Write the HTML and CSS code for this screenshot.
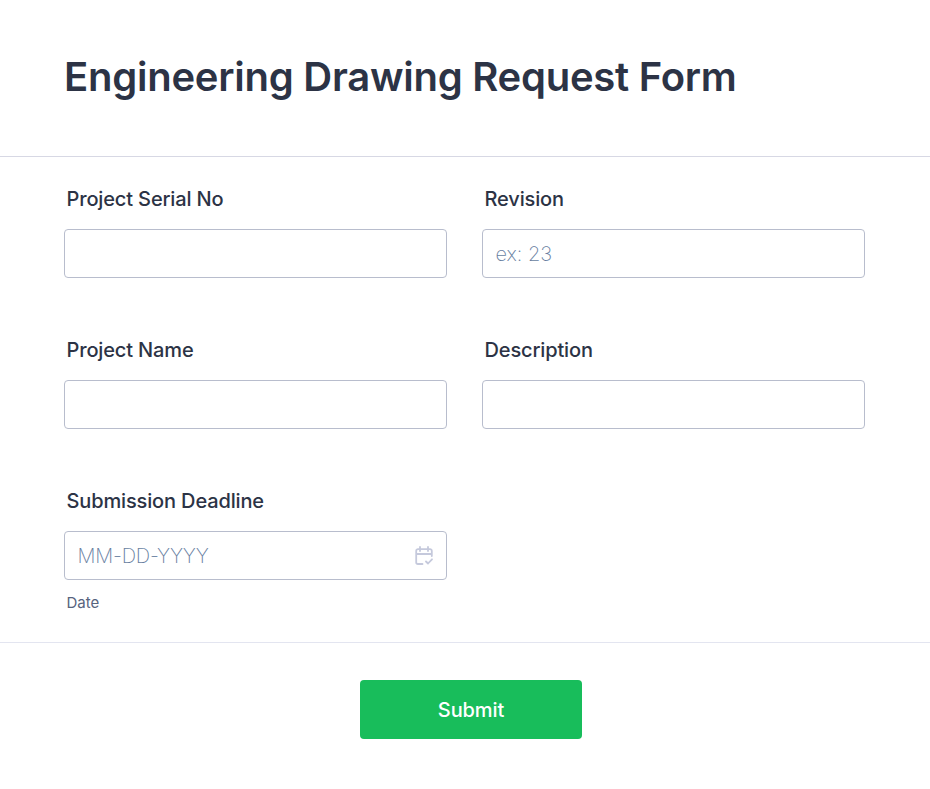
FILE: index.html
```html
<!DOCTYPE html>
<html lang="en">
<head>
    <meta charset="UTF-8">
    <meta name="viewport" content="width=device-width, initial-scale=1.0">
    <title>Engineering Drawing Request Form</title>
    <link rel="stylesheet" href="styles.css">
</head>
<body>
    <form class="form">
        <header class="form-header">
            <h1>Engineering Drawing Request Form</h1>
        </header>
        <div class="form-fields">
            <div class="field">
                <label for="serialNo">Project Serial No</label>
                <input type="text" id="serialNo">
            </div>
            <div class="field">
                <label for="revision">Revision</label>
                <input type="text" id="revision" placeholder="ex: 23">
            </div>
            <div class="field">
                <label for="projectName">Project Name</label>
                <input type="text" id="projectName">
            </div>
            <div class="field">
                <label for="description">Description</label>
                <input type="text" id="description">
            </div>
            <div class="field">
                <label for="deadline">Submission Deadline</label>
                <div class="date-input">
                    <input type="text" id="deadline" placeholder="MM-DD-YYYY">
                    <svg class="calendar-icon" viewBox="0 0 18 20" fill="none" stroke="currentColor" stroke-width="1.8" stroke-linecap="round" stroke-linejoin="round">
                        <path d="M7.5 18H3a1.8 1.8 0 0 1-1.8-1.8V5A1.8 1.8 0 0 1 3 3.2h12A1.8 1.8 0 0 1 16.8 5v5M1.2 8h15.6M5 1v4M13 1v4M11 15.5l2 2 4-4.2"/>
                    </svg>
                </div>
                <span class="hint">Date</span>
            </div>
        </div>
        <footer class="form-footer">
            <button type="submit">Submit</button>
        </footer>
    </form>
</body>
</html>
```

FILE: styles.css
```css
* {
    box-sizing: border-box;
}

body {
    margin: 0;
    font-family: Inter, sans-serif;
    color: #2c3345;
    background-color: #fff;
}

.form-header {
    height: 157px;
    padding: 52px 64px 0;
    border-bottom: 1px solid #d7d8e4;
}

h1 {
    margin: 0;
    font-size: 40px;
    font-weight: 600;
    line-height: 50px;
    letter-spacing: -0.25px;
    white-space: nowrap;
}

.form-fields {
    display: grid;
    grid-template-columns: 383px 383px;
    grid-template-rows: 151px 151px 152px;
    column-gap: 35px;
    height: 486px;
    padding: 30px 64px 0;
    border-bottom: 1px solid #e3e5f0;
}

label {
    display: block;
    height: 42px;
    padding-left: 2.5px;
    font-size: 20px;
    font-weight: 500;
    line-height: 24px;
    letter-spacing: -0.14px;
}

input {
    display: block;
    width: 100%;
    height: 49px;
    padding: 0 12.5px;
    border: 1px solid #b8bdcd;
    border-radius: 4px;
    font-family: inherit;
    font-size: 20px;
    background-color: #fff;
}

input::placeholder {
    color: #677e9f;
    font-weight: 200;
}

.date-input {
    position: relative;
}

.date-input input::placeholder {
    letter-spacing: -0.2px;
}

.calendar-icon {
    position: absolute;
    top: 15px;
    right: 14px;
    width: 18px;
    height: 20px;
    color: #c5c9dc;
}

.hint {
    display: block;
    margin-top: 14px;
    padding-left: 2.5px;
    font-size: 15px;
    line-height: 18px;
    color: #57647e;
}

.form-footer {
    display: flex;
    justify-content: center;
    padding: 37px 0 0 12px;
}

button {
    width: 222px;
    height: 59px;
    border: 0;
    border-radius: 4px;
    font-family: inherit;
    font-size: 20px;
    font-weight: 500;
    letter-spacing: -0.1px;
    color: #fff;
    background-color: #18bd5b;
    cursor: pointer;
}
```
